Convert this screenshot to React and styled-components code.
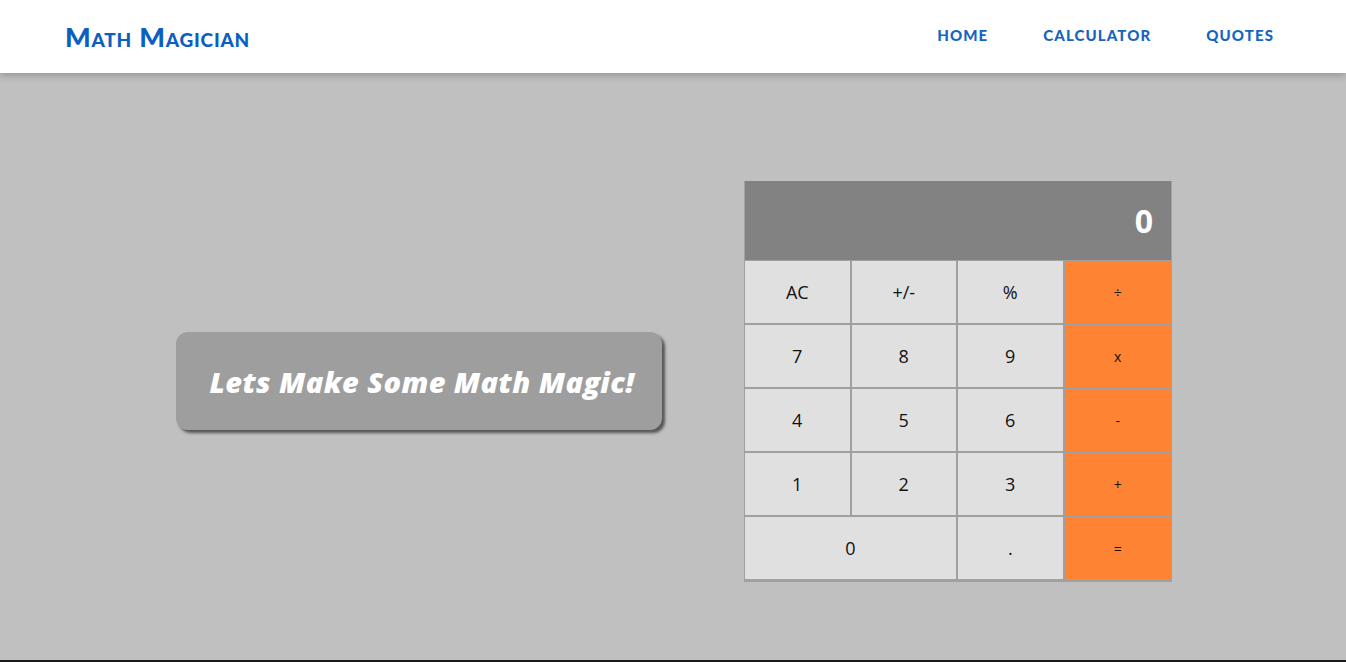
import React from 'react'
import styled, { createGlobalStyle } from 'styled-components'

const GlobalStyle = createGlobalStyle`
  * { box-sizing: border-box; }
  body {
    margin: 0;
    font-family: "Lato", "Open Sans", sans-serif;
    background: #c0c0c0;
  }
`

const Page = styled.div`
  height: 662px;
  display: flex;
  flex-direction: column;
  overflow: hidden;
`

const Header = styled.header`
  height: 73px;
  flex: none;
  background: #fff;
  display: flex;
  align-items: center;
  justify-content: space-between;
  padding: 0 72px 0 65px;
  box-shadow: 0 2px 8px rgba(0, 0, 0, 0.25);
  position: relative;
  z-index: 1;
`

const Logo = styled.h1`
  margin: 0;
  font-size: 27px;
  font-weight: 900;
  font-variant: small-caps;
  color: #0b5ec2;
  letter-spacing: 0.8px;
`

const Nav = styled.nav`
  display: flex;
  gap: 55px;
  padding-bottom: 4px;
`

const NavLink = styled.a`
  font-family: "Lato", sans-serif;
  font-size: 15px;
  font-weight: 900;
  letter-spacing: 1.1px;
  color: #1565c0;
  text-decoration: none;
`

const Main = styled.main`
  flex: 1;
  display: flex;
  justify-content: center;
  align-items: flex-start;
  gap: 82px;
  padding-top: 108px;
  padding-left: 2px;
`

const Banner = styled.div`
  margin-top: 151px;
  width: 486px;
  height: 98px;
  border-radius: 12px;
  background: #9e9e9e;
  box-shadow: 3px 3px 3px #555;
  display: flex;
  align-items: center;
  justify-content: center;
  padding-left: 6px;
  color: #fff;
  font-family: "Open Sans", sans-serif;
  font-size: 29px;
  font-weight: 800;
  font-style: italic;
  letter-spacing: 0.4px;
`

const Calc = styled.div`
  width: 428px;
  display: grid;
  grid-template-columns: repeat(4, 1fr);
  border: 1px solid #a0a0a0;
  border-top: none;
`

const Display = styled.div`
  grid-column: span 4;
  height: 80px;
  background: #828282;
  color: #fff;
  font-family: "Open Sans", sans-serif;
  font-size: 32px;
  font-weight: 700;
  display: flex;
  align-items: center;
  justify-content: flex-end;
  padding-right: 18px;
  border-bottom: 1px solid #a0a0a0;
`

const Key = styled.button`
  grid-column: ${(p) => (p.$wide ? 'span 2' : 'span 1')};
  height: 64px;
  border: none;
  border-right: ${(p) => (p.$op ? 'none' : '2px solid #a0a0a0')};
  border-bottom: 2px solid #a0a0a0;
  background: ${(p) => (p.$op ? '#fe8433' : '#e0e0e0')};
  color: #111;
  font-family: "Open Sans", sans-serif;
  font-size: ${(p) => (p.$op ? '14px' : '18px')};
  padding: 0;
`

const Bottom = styled.div`
  height: 2px;
  flex: none;
  background: #1a1a1a;
`

const keys = [
  ['AC'], ['+/-'], ['%'], ['÷', 'op'],
  ['7'], ['8'], ['9'], ['x', 'op'],
  ['4'], ['5'], ['6'], ['-', 'op'],
  ['1'], ['2'], ['3'], ['+', 'op'],
  ['0', 'wide'], ['.'], ['=', 'op'],
]

const App = () => (
  <Page>
    <GlobalStyle />
    <Header>
      <Logo>Math Magician</Logo>
      <Nav>
        <NavLink href="#">HOME</NavLink>
        <NavLink href="#">CALCULATOR</NavLink>
        <NavLink href="#">QUOTES</NavLink>
      </Nav>
    </Header>
    <Main>
      <Banner>Lets Make Some Math Magic!</Banner>
      <Calc>
        <Display>0</Display>
        {keys.map(([label, kind]) => (
          <Key
            key={label}
            type="button"
            $op={kind === 'op'}
            $wide={kind === 'wide'}
          >
            {label}
          </Key>
        ))}
      </Calc>
    </Main>
    <Bottom />
  </Page>
)

export default App
